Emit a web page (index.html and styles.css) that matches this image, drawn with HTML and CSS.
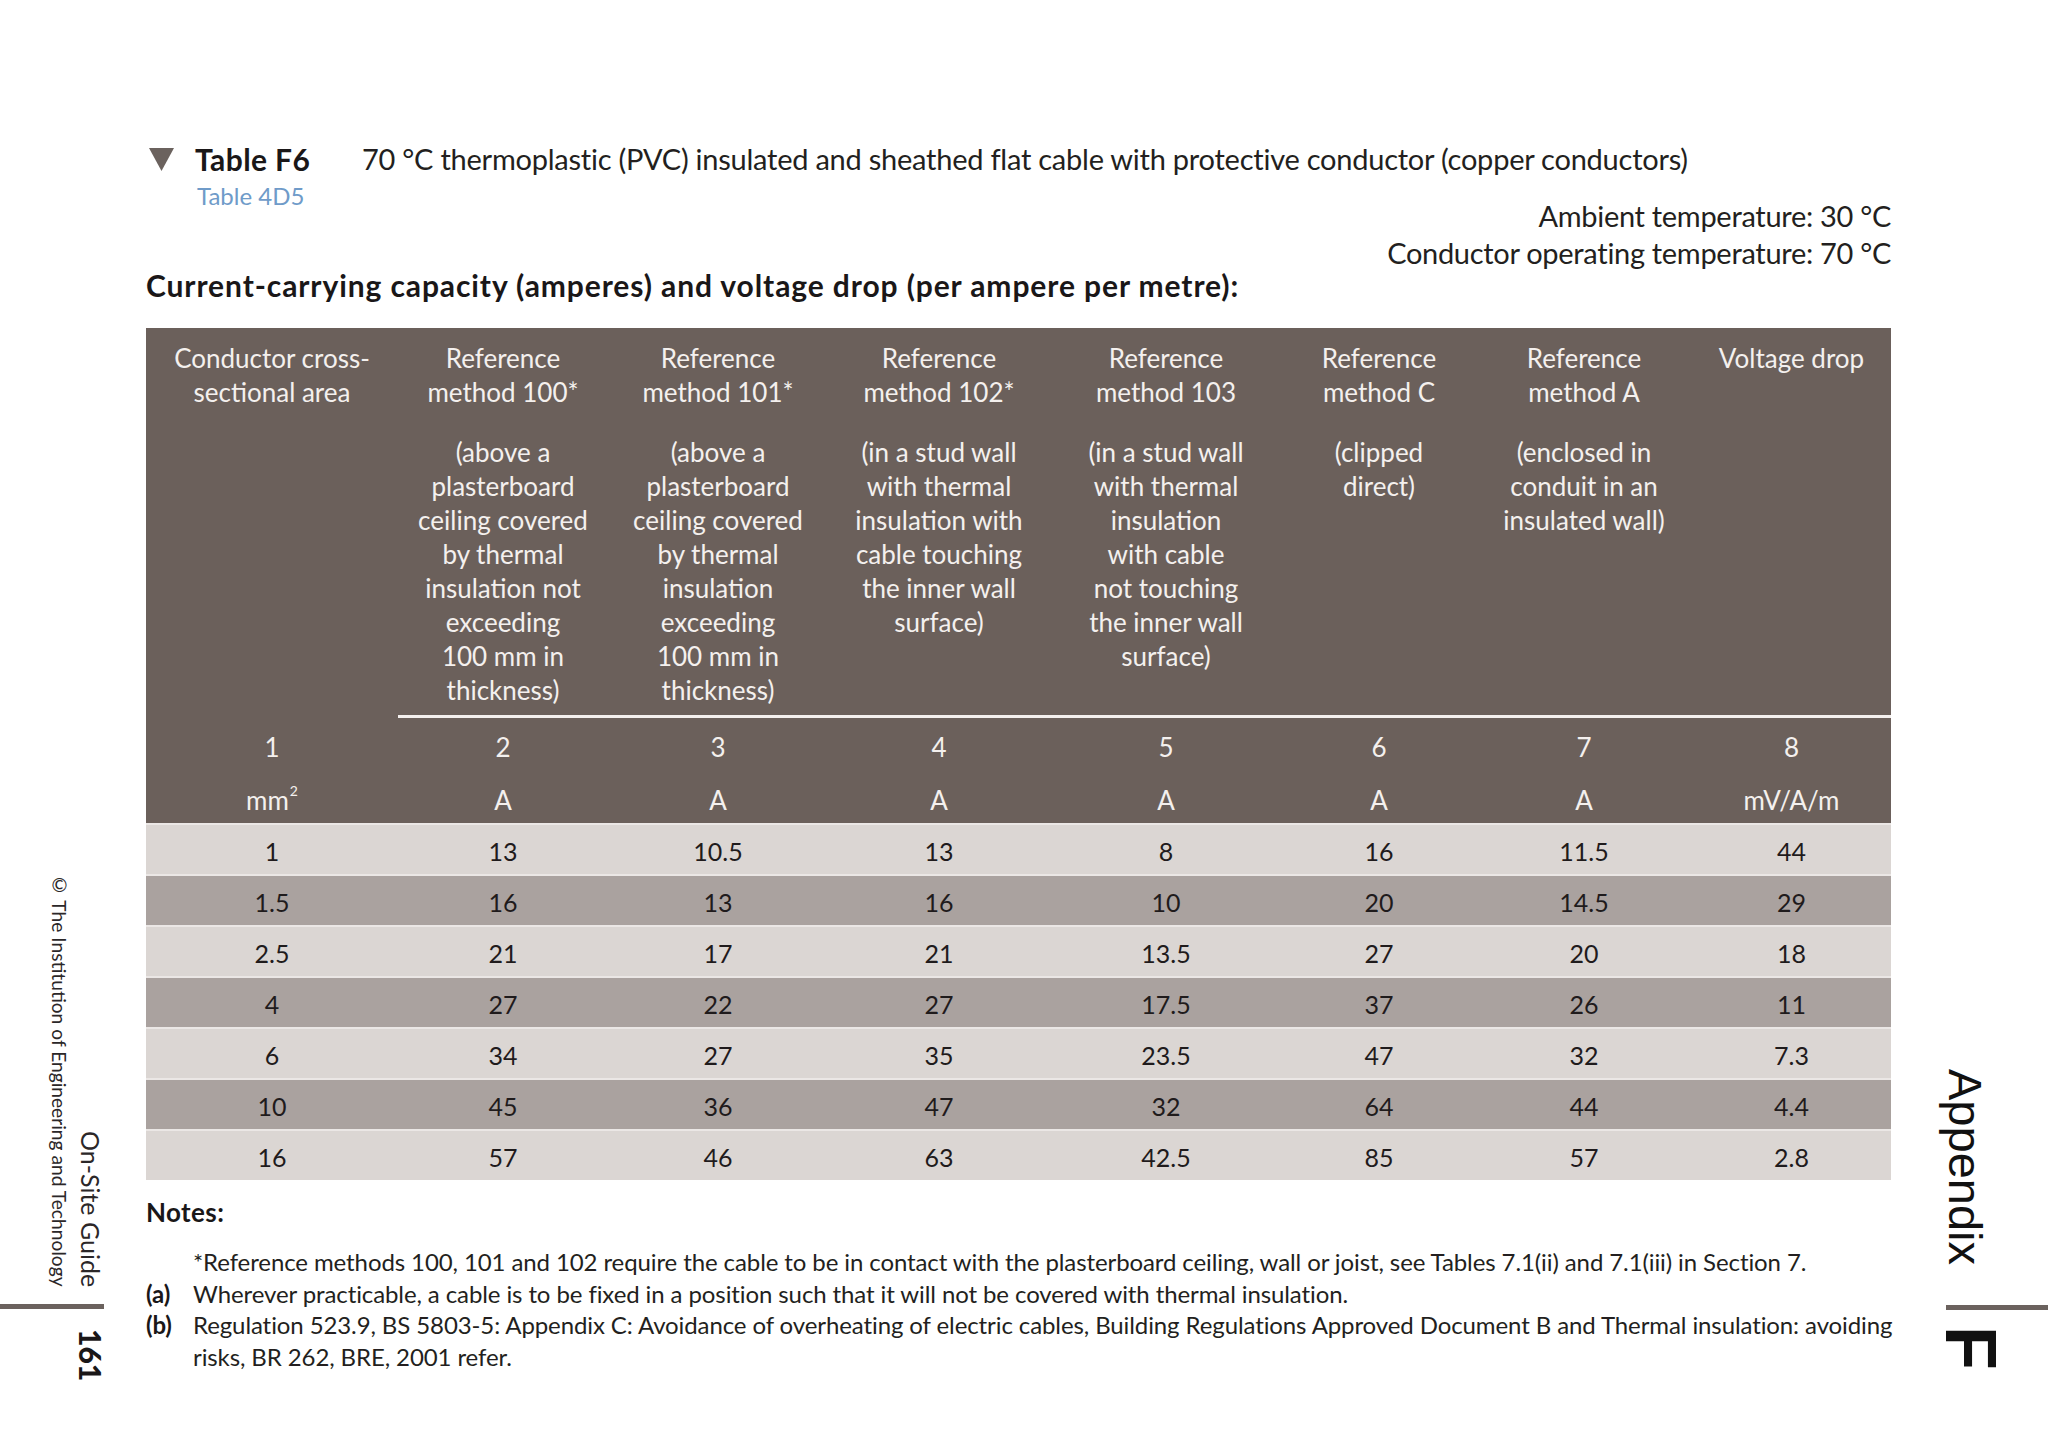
FILE: index.html
```html
<!DOCTYPE html>
<html lang="en">
<head>
<meta charset="utf-8">
<title>Table F6</title>
<link rel="stylesheet" href="styles.css">
</head>
<body>
<div class="page">
  <aside class="gutter-left">
    <div class="vgroup">
      <span class="copy">© The Institution of Engineering and Technology</span>
      <span class="osg">On-Site Guide</span>
    </div>
    <div class="bar-l"></div>
    <div class="pageno">161</div>
  </aside>

  <main class="content">
    <div class="titleblock">
      <div class="tri"><svg width="25" height="23" viewBox="0 0 25 23"><polygon points="0,0 25,0 12.5,23" fill="#6b625e"/></svg></div>
      <div class="tf6">Table F6</div>
      <div class="desc">70 °C thermoplastic (PVC) insulated and sheathed flat cable with protective conductor (copper conductors)</div>
      <div></div>
      <div class="ref">Table 4D5</div>
      <div class="conds">Ambient temperature: 30 °C<br>Conductor operating temperature: 70 °C</div>
    </div>

    <h2 class="subhead">Current-carrying capacity (amperes) and voltage drop (per ampere per metre):</h2>

    <table class="cap">
      <colgroup>
        <col class="c1"><col class="c2"><col class="c3"><col class="c4"><col class="c5"><col class="c6"><col class="c7"><col class="c8">
      </colgroup>
      <thead>
        <tr class="hd">
          <th>Conductor cross-<br>sectional area</th>
          <th class="ul">Reference<br>method 100*<span class="sub">(above a<br>plasterboard<br>ceiling covered<br>by thermal<br>insulation not<br>exceeding<br>100 mm in<br>thickness)</span></th>
          <th class="ul">Reference<br>method 101*<span class="sub">(above a<br>plasterboard<br>ceiling covered<br>by thermal<br>insulation<br>exceeding<br>100 mm in<br>thickness)</span></th>
          <th class="ul">Reference<br>method 102*<span class="sub">(in a stud wall<br>with thermal<br>insulation with<br>cable touching<br>the inner wall<br>surface)</span></th>
          <th class="ul">Reference<br>method 103<span class="sub">(in a stud wall<br>with thermal<br>insulation<br>with cable<br>not touching<br>the inner wall<br>surface)</span></th>
          <th class="ul">Reference<br>method C<span class="sub">(clipped<br>direct)</span></th>
          <th class="ul">Reference<br>method A<span class="sub">(enclosed in<br>conduit in an<br>insulated wall)</span></th>
          <th class="ul">Voltage drop</th>
        </tr>
        <tr class="num">
          <th>1</th><th>2</th><th>3</th><th>4</th><th>5</th><th>6</th><th>7</th><th>8</th>
        </tr>
        <tr class="unit">
          <th>mm<sup>2</sup></th><th>A</th><th>A</th><th>A</th><th>A</th><th>A</th><th>A</th><th>mV/A/m</th>
        </tr>
      </thead>
      <tbody>
        <tr><td>1</td><td>13</td><td>10.5</td><td>13</td><td>8</td><td>16</td><td>11.5</td><td>44</td></tr>
        <tr><td>1.5</td><td>16</td><td>13</td><td>16</td><td>10</td><td>20</td><td>14.5</td><td>29</td></tr>
        <tr><td>2.5</td><td>21</td><td>17</td><td>21</td><td>13.5</td><td>27</td><td>20</td><td>18</td></tr>
        <tr><td>4</td><td>27</td><td>22</td><td>27</td><td>17.5</td><td>37</td><td>26</td><td>11</td></tr>
        <tr><td>6</td><td>34</td><td>27</td><td>35</td><td>23.5</td><td>47</td><td>32</td><td>7.3</td></tr>
        <tr><td>10</td><td>45</td><td>36</td><td>47</td><td>32</td><td>64</td><td>44</td><td>4.4</td></tr>
        <tr><td>16</td><td>57</td><td>46</td><td>63</td><td>42.5</td><td>85</td><td>57</td><td>2.8</td></tr>
      </tbody>
    </table>

    <section class="notes">
      <h3>Notes:</h3>
      <div class="note"><span class="k"></span><span>*Reference methods 100, 101 and 102 require the cable to be in contact with the plasterboard ceiling, wall or joist, see Tables 7.1(ii) and 7.1(iii) in Section 7.</span></div>
      <div class="note"><span class="k">(a)</span><span>Wherever practicable, a cable is to be fixed in a position such that it will not be covered with thermal insulation.</span></div>
      <div class="note"><span class="k">(b)</span><span>Regulation 523.9, BS 5803-5: Appendix C: Avoidance of overheating of electric cables, Building Regulations Approved Document B and Thermal insulation: avoiding risks, BR 262, BRE, 2001 refer.</span></div>
    </section>
  </main>

  <aside class="gutter-right">
    <div class="appendix">Appendix</div>
    <div class="bar-r"></div>
    <div class="letter">F</div>
  </aside>
</div>
</body>
</html>
```

FILE: styles.css
```css
html, body {
  margin: 0;
  padding: 0;
  background: #ffffff;
}

body {
  font-family: Lato, "Open Sans", sans-serif;
  color: #231f20;
}

.page {
  display: flex;
  width: 2048px;
  height: 1443px;
  overflow: hidden;
}

/* ---------- left gutter ---------- */
.gutter-left {
  width: 146px;
  flex: none;
  display: flex;
  flex-direction: column;
  justify-content: flex-end;
  align-items: flex-start;
  padding-bottom: 62px;
  box-sizing: border-box;
}

.vgroup {
  display: flex;
  align-items: flex-end;
  margin-left: 48px;
  margin-bottom: 17px;
  gap: 6px;
}

.copy {
  writing-mode: vertical-rl;
  font-size: 19.2px;
  line-height: 22px;
  color: #2b2728;
}

.osg {
  writing-mode: vertical-rl;
  font-size: 25px;
  line-height: 30px;
  color: #2b2728;
}

.bar-l {
  width: 104px;
  height: 5px;
  background: #6b625e;
}

.pageno {
  writing-mode: vertical-rl;
  font-weight: 900;
  font-size: 30px;
  line-height: 30px;
  margin-left: 76px;
  margin-top: 20px;
  color: #1a1718;
}

/* ---------- right gutter ---------- */
.gutter-right {
  width: 157px;
  flex: none;
  display: flex;
  flex-direction: column;
  justify-content: flex-end;
  align-items: flex-start;
  padding-bottom: 73px;
  box-sizing: border-box;
}

.appendix {
  writing-mode: vertical-rl;
  font-family: "Liberation Sans", Arial, sans-serif;
  font-size: 47px;
  line-height: 47px;
  margin-left: 51px;
  margin-bottom: 40px;
  color: #111;
}

.bar-r {
  align-self: stretch;
  height: 5px;
  margin-left: 55px;
  background: #6b625e;
}

.letter {
  writing-mode: vertical-rl;
  font-family: "Liberation Sans", Arial, sans-serif;
  font-weight: 700;
  font-size: 72px;
  line-height: 72px;
  margin-left: 44px;
  margin-top: 16px;
  color: #111;
}

/* ---------- main content ---------- */
.content {
  width: 1745px;
  flex: none;
  padding-top: 141px;
}

.titleblock {
  display: grid;
  grid-template-columns: 49px 167px 1fr;
}

.tri {
  padding-top: 7px;
  padding-left: 3px;
}

.tri svg {
  display: block;
}

.tf6 {
  font-weight: 700;
  font-size: 30px;
  line-height: 36px;
  letter-spacing: 0.4px;
  color: #1a1718;
}

.desc {
  font-size: 29px;
  line-height: 36px;
  font-weight: 400;
  letter-spacing: -0.24px;
  color: #231f20;
}

.ref {
  font-size: 24px;
  line-height: 38px;
  color: #6f9bc9;
  padding-left: 2px;
}

.conds {
  text-align: right;
  font-size: 29px;
  line-height: 37px;
  font-weight: 400;
  letter-spacing: -0.3px;
  padding-top: 20px;
  color: #231f20;
}

.subhead {
  margin: -4px 0 25px;
  font-size: 30px;
  line-height: 36px;
  font-weight: 700;
  letter-spacing: 0.9px;
  color: #1a1718;
}

/* ---------- table ---------- */
.cap {
  width: 1745px;
  border-collapse: collapse;
  table-layout: fixed;
}

.c1 { width: 252px; }
.c2 { width: 210px; }
.c3 { width: 220px; }
.c4 { width: 222px; }
.c5 { width: 232px; }
.c6 { width: 194px; }
.c7 { width: 216px; }
.c8 { width: 199px; }

.cap th {
  background: #6b605b;
  color: #f4f0ee;
  font-weight: 400;
  font-size: 26px;
  line-height: 34px;
  text-align: center;
  vertical-align: top;
  padding: 0;
  white-space: nowrap;
}

.cap .hd th {
  padding: 13px 0 11px;
}

.cap .hd th.ul {
  box-shadow: inset 0 -3px 0 #f4f0ee;
}

.sub {
  display: block;
  margin-top: 26px;
}

.cap .num th {
  padding-top: 12px;
}

.cap .unit th {
  padding: 19px 0 6px;
}

.cap sup {
  font-size: 14px;
  line-height: 0;
  vertical-align: 14px;
  margin-left: 1px;
}

.cap td {
  height: 46px;
  padding: 5px 0 0;
  line-height: 46px;
  text-align: center;
  font-size: 25px;
  color: #1f1b1c;
  background: #dbd6d3;
  box-shadow: inset 0 2px 0 #ebe7e5;
}

.cap tbody tr:nth-child(even) td {
  background: #aaa29f;
}

/* ---------- notes ---------- */
.notes {
  margin-top: 16px;
  margin-right: -24px;
  font-size: 24px;
  line-height: 31.5px;
  font-weight: 400;
  letter-spacing: -0.1px;
  color: #231f20;
}

.notes h3 {
  margin: 0 0 18px;
  font-size: 26px;
  line-height: 32px;
  font-weight: 700;
  letter-spacing: 0.4px;
  color: #1a1718;
}

.note {
  display: grid;
  grid-template-columns: 47px 1fr;
}

.note .k {
  font-weight: 700;
  color: #1a1718;
}
```
